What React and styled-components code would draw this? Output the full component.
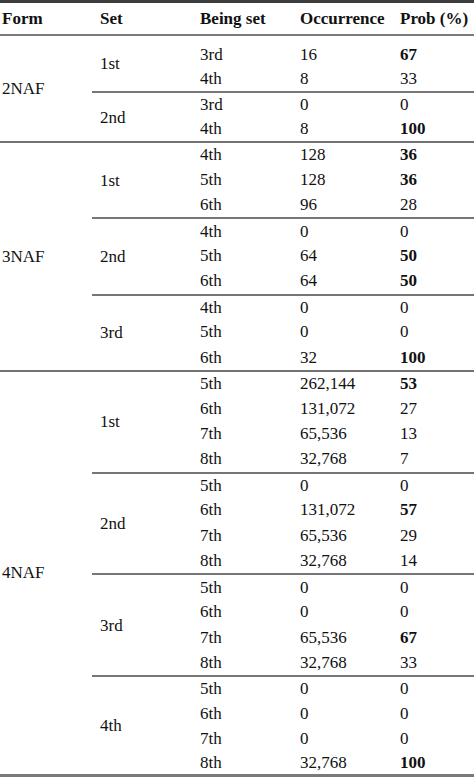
import React from "react";
import styled, { createGlobalStyle } from "styled-components";

const GlobalStyle = createGlobalStyle`
  html, body {
    margin: 0;
    padding: 0;
    background: #ffffff;
  }
  body {
    font-family: "Liberation Serif", "Times New Roman", serif;
    color: #111111;
  }
`;

// data
const forms = [
  {
    name: "2NAF",
    rowH: 25,
    sets: [
      { name: "1st", rows: [["3rd", "16", "67", true], ["4th", "8", "33"]] },
      { name: "2nd", rows: [["3rd", "0", "0"], ["4th", "8", "100", true]] },
    ],
  },
  {
    name: "3NAF",
    rowH: 25.44,
    sets: [
      {
        name: "1st",
        rows: [["4th", "128", "36", true], ["5th", "128", "36", true], ["6th", "96", "28"]],
      },
      {
        name: "2nd",
        rows: [["4th", "0", "0"], ["5th", "64", "50", true], ["6th", "64", "50", true]],
      },
      {
        name: "3rd",
        rows: [["4th", "0", "0"], ["5th", "0", "0"], ["6th", "32", "100", true]],
      },
    ],
  },
  {
    name: "4NAF",
    rowH: 25.44,
    sets: [
      {
        name: "1st",
        rows: [
          ["5th", "262,144", "53", true],
          ["6th", "131,072", "27"],
          ["7th", "65,536", "13"],
          ["8th", "32,768", "7"],
        ],
      },
      {
        name: "2nd",
        rows: [
          ["5th", "0", "0"],
          ["6th", "131,072", "57", true],
          ["7th", "65,536", "29"],
          ["8th", "32,768", "14"],
        ],
      },
      {
        name: "3rd",
        rows: [
          ["5th", "0", "0"],
          ["6th", "0", "0"],
          ["7th", "65,536", "67", true],
          ["8th", "32,768", "33"],
        ],
      },
      {
        name: "4th",
        rows: [
          ["5th", "0", "0"],
          ["6th", "0", "0"],
          ["7th", "0", "0"],
          ["8th", "32,768", "100", true],
        ],
      },
    ],
  },
];

const Page = styled.div`
  width: 474px;
`;

const Table = styled.table`
  width: 474px;
  table-layout: fixed;
  border-collapse: separate;
  border-spacing: 0;
  font-size: 17px;
  line-height: 1;
`;

const HeadCell = styled.th`
  height: 31px;
  padding: 0 0 0 ${(p) => p.$pad}px;
  text-align: left;
  font-weight: bold;
  border-top: 3px solid #3c3c3c;
  border-bottom: 2px solid #7a7a7a;
  vertical-align: middle;
  white-space: nowrap;
`;

const Row = styled.tr`
  height: ${(p) => (p.$first ? 30 : p.$h)}px;
`;

const Cell = styled.td`
  padding: ${(p) => (p.$first ? "6px" : "0")} 0 0 ${(p) => p.$pad}px;
  vertical-align: middle;
  white-space: nowrap;
  font-weight: ${(p) => (p.$bold ? "bold" : "normal")};
  border-top: ${(p) =>
    p.$formLine ? "2px solid #727272" : p.$setLine ? "2px solid #767676" : "none"};
  border-bottom: ${(p) => (p.$last ? "3px solid #7a7a7a" : "none")};
`;

const GroupCell = styled(Cell)`
  vertical-align: middle;
`;

const App = () => {
  const body = [];
  forms.forEach((form, fi) => {
    const formRows = form.sets.reduce((n, s) => n + s.rows.length, 0);
    form.sets.forEach((set, si) => {
      set.rows.forEach((r, ri) => {
        const firstOfForm = si === 0 && ri === 0;
        const firstOfSet = ri === 0;
        const formLine = firstOfForm && fi > 0;
        const setLine = firstOfSet && si > 0;
        const first = fi === 0 && firstOfForm;
        const lastForm = fi === forms.length - 1;
        const last =
          lastForm && si === form.sets.length - 1 && ri === set.rows.length - 1;
        const lastSet = lastForm && si === form.sets.length - 1;
        body.push(
          <Row key={`${fi}-${si}-${ri}`} $first={first} $h={form.rowH}>
            {firstOfForm && (
              <GroupCell rowSpan={formRows} $pad={2} $formLine={formLine} $last={lastForm}>
                {form.name}
              </GroupCell>
            )}
            {firstOfSet && (
              <GroupCell
                rowSpan={set.rows.length}
                $pad={8}
                $formLine={formLine}
                $setLine={setLine}
                $last={lastSet}
              >
                {set.name}
              </GroupCell>
            )}
            <Cell $pad={8} $first={first} $formLine={formLine} $setLine={setLine} $last={last}>
              {r[0]}
            </Cell>
            <Cell $pad={8} $first={first} $formLine={formLine} $setLine={setLine} $last={last}>
              {r[1]}
            </Cell>
            <Cell
              $pad={8}
              $first={first}
              $bold={r[3]}
              $formLine={formLine}
              $setLine={setLine}
              $last={last}
            >
              {r[2]}
            </Cell>
          </Row>
        );
      });
    });
  });

  return (
    <Page>
      <GlobalStyle />
      <Table>
        <colgroup>
          <col style={{ width: "92px" }} />
          <col style={{ width: "100px" }} />
          <col style={{ width: "100px" }} />
          <col style={{ width: "100px" }} />
          <col style={{ width: "82px" }} />
        </colgroup>
        <thead>
          <tr>
            <HeadCell $pad={2}>Form</HeadCell>
            <HeadCell $pad={8}>Set</HeadCell>
            <HeadCell $pad={8}>Being set</HeadCell>
            <HeadCell $pad={8}>Occurrence</HeadCell>
            <HeadCell $pad={8}>Prob (%)</HeadCell>
          </tr>
        </thead>
        <tbody>{body}</tbody>
      </Table>
    </Page>
  );
};

export default App;
